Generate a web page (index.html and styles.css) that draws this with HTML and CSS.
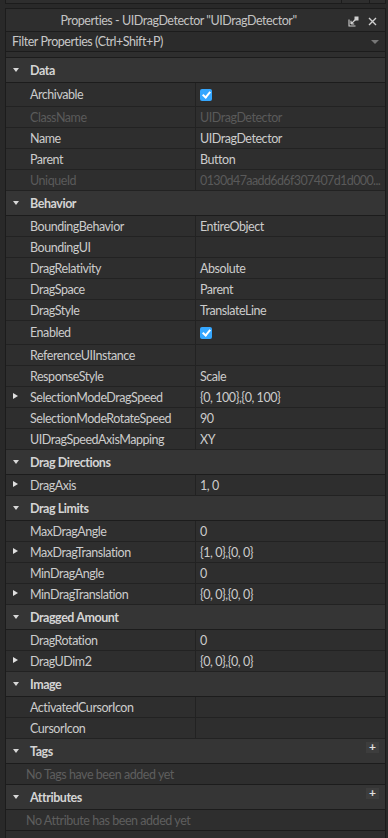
FILE: index.html
```html
<!DOCTYPE html>
<html>
<head>
<meta charset="utf-8">
<link rel="stylesheet" href="styles.css">
</head>
<body>
<div class="prev-panel"><div class="prev-inner"><span class="prev-col"></span><span class="prev-col small"></span></div></div>
<div class="panel">
  <div class="titlebar">
    <span class="title">Properties - UIDragDetector "UIDragDetector"</span>
    <span class="title-icons">
      <svg class="ico" width="11" height="11" viewBox="0 0 11 11"><path d="M1 3.5v6.5h6.5" fill="none" stroke="#d0d0d0" stroke-width="1.1"/><rect x="6.5" y="0.5" width="4" height="4" fill="#d0d0d0"/><path d="M7.5 3.5L3 8M3 8v-3.2M3 8h3.2" stroke="#d0d0d0" stroke-width="1.2" fill="none"/></svg>
      <svg class="ico" width="9" height="9" viewBox="0 0 9 9"><path d="M1 1l7 7M8 1l-7 7" stroke="#d0d0d0" stroke-width="1.4"/></svg>
    </span>
  </div>
  <div class="filter">
    <span>Filter Properties (Ctrl+Shift+P)</span>
    <span class="dd"></span>
  </div>
  <div class="list">
    <div class="hdr"><span class="tri-down"></span>Data</div>
    <div class="row chk"><span class="n">Archivable</span><span class="v"><span class="cb"></span></span></div>
    <div class="row dis"><span class="n">ClassName</span><span class="v">UIDragDetector</span></div>
    <div class="row"><span class="n">Name</span><span class="v">UIDragDetector</span></div>
    <div class="row"><span class="n">Parent</span><span class="v">Button</span></div>
    <div class="row dis"><span class="n">UniqueId</span><span class="v uid">0130d47aadd6d6f307407d1d000...</span></div>

    <div class="hdr"><span class="tri-down"></span>Behavior</div>
    <div class="row"><span class="n">BoundingBehavior</span><span class="v">EntireObject</span></div>
    <div class="row"><span class="n">BoundingUI</span><span class="v"></span></div>
    <div class="row"><span class="n">DragRelativity</span><span class="v">Absolute</span></div>
    <div class="row"><span class="n">DragSpace</span><span class="v">Parent</span></div>
    <div class="row"><span class="n">DragStyle</span><span class="v">TranslateLine</span></div>
    <div class="row chk"><span class="n">Enabled</span><span class="v"><span class="cb"></span></span></div>
    <div class="row"><span class="n">ReferenceUIInstance</span><span class="v"></span></div>
    <div class="row"><span class="n">ResponseStyle</span><span class="v">Scale</span></div>
    <div class="row"><span class="n"><span class="tri-right"></span>SelectionModeDragSpeed</span><span class="v">{0, 100},{0, 100}</span></div>
    <div class="row"><span class="n">SelectionModeRotateSpeed</span><span class="v">90</span></div>
    <div class="row"><span class="n">UIDragSpeedAxisMapping</span><span class="v">XY</span></div>

    <div class="hdr"><span class="tri-down"></span>Drag Directions</div>
    <div class="row"><span class="n"><span class="tri-right"></span>DragAxis</span><span class="v">1, 0</span></div>

    <div class="hdr"><span class="tri-down"></span>Drag Limits</div>
    <div class="row"><span class="n">MaxDragAngle</span><span class="v">0</span></div>
    <div class="row"><span class="n"><span class="tri-right"></span>MaxDragTranslation</span><span class="v">{1, 0},{0, 0}</span></div>
    <div class="row"><span class="n">MinDragAngle</span><span class="v">0</span></div>
    <div class="row"><span class="n"><span class="tri-right"></span>MinDragTranslation</span><span class="v">{0, 0},{0, 0}</span></div>

    <div class="hdr"><span class="tri-down"></span>Dragged Amount</div>
    <div class="row"><span class="n">DragRotation</span><span class="v">0</span></div>
    <div class="row"><span class="n"><span class="tri-right"></span>DragUDim2</span><span class="v">{0, 0},{0, 0}</span></div>

    <div class="hdr"><span class="tri-down"></span>Image</div>
    <div class="row"><span class="n">ActivatedCursorIcon</span><span class="v"></span></div>
    <div class="row"><span class="n">CursorIcon</span><span class="v"></span></div>

    <div class="hdr"><span class="tri-down"></span>Tags<span class="plus">+</span></div>
    <div class="empty">No Tags have been added yet</div>
    <div class="hdr"><span class="tri-down"></span>Attributes<span class="plus">+</span></div>
    <div class="empty">No Attribute has been added yet</div>
  </div>
</div>
</body>
</html>
```
FILE: styles.css
```css
* { box-sizing: border-box; }
html, body { margin: 0; padding: 0; }
body {
  background: #292929;
  width: 388px;
  height: 838px;
  overflow: hidden;
  font-family: Lato, "Open Sans", sans-serif;
  font-size: 12.5px;
  letter-spacing: -0.45px;
  color: #cccccc;
}
.prev-panel {
  height: 4px;
  padding: 0 2px 0 5px;
}
.prev-inner {
  height: 4px;
  border: 1px solid #1c1c1c;
  border-top: none;
  background: #2e2e2e;
  display: flex;
  justify-content: flex-end;
}
.prev-col { width: 28px; border-left: 1px solid #1c1c1c; }
.prev-col.small { width: 16px; }
.panel {
  margin: 4px 2px 0 5px;
  border-left: 1px solid #1c1c1c;
  border-right: 1px solid #1c1c1c;
  background: #2e2e2e;
  height: 830px;
}
.titlebar {
  height: 24px;
  background: #2e2e2e;
  border-top: 1px solid #1c1c1c;
  border-bottom: 1px solid #1c1c1c;
  display: flex;
  align-items: center;
  justify-content: center;
  position: relative;
  padding-right: 34px;
  color: #c4c4c4;
}
.title { padding-top: 1px; }
.title-icons {
  position: absolute;
  right: 8px;
  top: 7px;
  display: flex;
  align-items: center;
  gap: 9px;
}
.ico { display: block; }
.filter {
  height: 20px;
  background: #2b2b2b;
  border-bottom: 1px solid #1c1c1c;
  display: flex;
  align-items: center;
  justify-content: space-between;
  padding: 0 6px 0 6px;
  color: #c8c8c8;
}
.dd {
  width: 0; height: 0;
  border-left: 4px solid transparent;
  border-right: 4px solid transparent;
  border-top: 4px solid #777;
}
.list {
  margin-top: 5px;
  border-top: 1px solid #1c1c1c;
}
.hdr {
  height: 25px;
  background: #353535;
  border-bottom: 1px solid #1c1c1c;
  display: flex;
  align-items: center;
  font-weight: bold;
  color: #d4d4d4;
  padding-left: 24px;
  position: relative;
}
.tri-down {
  position: absolute;
  left: 7px;
  top: 10px;
  width: 0; height: 0;
  border-left: 3.5px solid transparent;
  border-right: 3.5px solid transparent;
  border-top: 4px solid #d8d8d8;
}
.plus {
  position: absolute;
  right: 6px;
  top: 3px;
  width: 13px;
  height: 11px;
  background: #3d3d3d;
  color: #e0e0e0;
  font-size: 12px;
  line-height: 10px;
  text-align: center;
  font-weight: bold;
  letter-spacing: 0;
}
.row {
  height: 21px;
  border-bottom: 1px solid #222222;
  display: grid;
  grid-template-columns: 190px 1fr;
  background: #2e2e2e;
}
.row.chk { height: 24px; }
.n {
  padding-left: 24px;
  border-right: 1px solid #222222;
  display: flex;
  align-items: center;
  position: relative;
  white-space: nowrap;
}
.v {
  padding-left: 4px;
  display: flex;
  align-items: center;
  white-space: nowrap;
  overflow: hidden;
}
.v.uid { letter-spacing: -0.6px; }
.dis .n, .dis .v { color: #5a5a5a; }
.tri-right {
  position: absolute;
  left: 7px;
  top: 6px;
  width: 0; height: 0;
  border-top: 3.5px solid transparent;
  border-bottom: 3.5px solid transparent;
  border-left: 5px solid #e0e0e0;
}
.cb {
  width: 12px;
  height: 12px;
  border-radius: 2px;
  background: #35a7ff;
  position: relative;
}
.cb::after {
  content: "";
  position: absolute;
  left: 3.5px;
  top: 1px;
  width: 3px;
  height: 6px;
  border-right: 2px solid #fff;
  border-bottom: 2px solid #fff;
  transform: rotate(40deg);
}
.empty {
  height: 21px;
  border-bottom: 1px solid #1c1c1c;
  display: flex;
  align-items: center;
  padding-left: 20px;
  color: #5e5e5e;
}
```
